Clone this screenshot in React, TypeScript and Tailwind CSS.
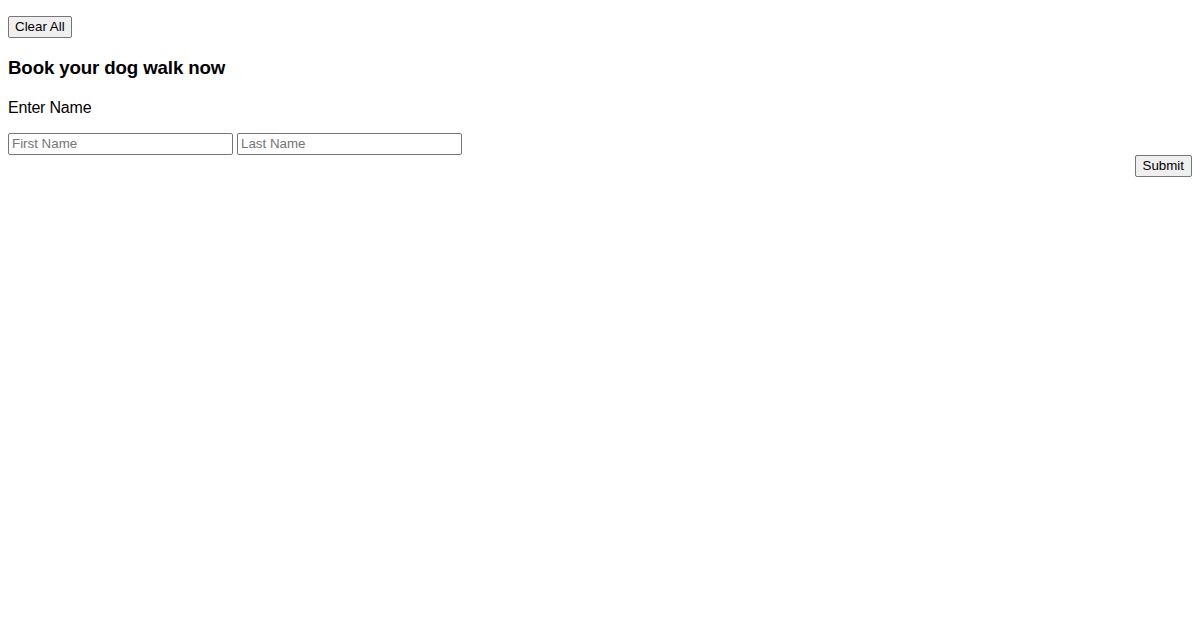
import React from "react";

const btnBase =
  "h-[22px] pb-[2px] border border-[#767676] rounded-[2px] bg-[#efefef] text-[13.333px] leading-[15px] text-black font-['Liberation_Sans',Arial,sans-serif]";
const inp =
  "w-[225px] h-[22px] px-[3px] pb-[2px] border border-[#767676] rounded-[2px] bg-white text-[13.333px] text-black placeholder:text-[#757575] font-['Liberation_Sans',Arial,sans-serif]";

export default function App() {
  return (
    <div className="bg-white min-h-[630px] p-2 text-black font-['Liberation_Sans',Arial,sans-serif]">
      <div className="flex pt-2">
        <button className={`${btnBase} px-[6px]`}>Clear All</button>
      </div>
      <h3 className="mt-[19px] mb-[20px] text-[18.72px] font-bold leading-[22px] tracking-[-0.14px]">
        Book your dog walk now
      </h3>
      <p className="text-[16px] leading-[18px] mb-4 tracking-[-0.2px]">Enter Name</p>
      <div className="flex gap-1">
        <input className={inp} placeholder="First Name" />
        <input className={inp} placeholder="Last Name" />
      </div>
      <div className="flex justify-end">
        <button className={`${btnBase} px-[7px]`}>Submit</button>
      </div>
    </div>
  );
}
